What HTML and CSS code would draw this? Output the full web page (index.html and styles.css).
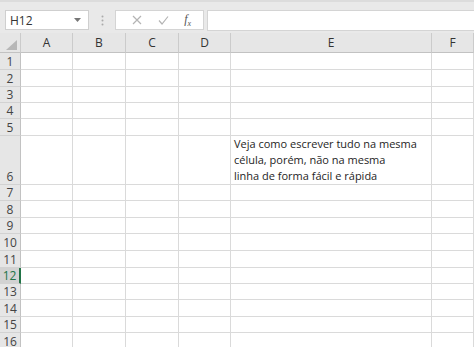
FILE: index.html
```html
<!DOCTYPE html>
<html lang="pt">
<head>
    <meta charset="UTF-8">
    <meta name="viewport" content="width=device-width, initial-scale=1.0">
    <title>Planilha</title>
    <link rel="stylesheet" href="styles.css">
</head>
<body>
    <div class="formula-bar">
        <div class="name-box">
            <span>H12</span>
            <svg class="arrow" width="7" height="4" viewBox="0 0 7 4"><path d="M0 0h7L3.5 4z" fill="#777"/></svg>
        </div>
        <div class="grip">
            <svg width="3" height="11" viewBox="0 0 3 11"><circle cx="1.5" cy="1.5" r="1" fill="#aaa"/><circle cx="1.5" cy="5.5" r="1" fill="#aaa"/><circle cx="1.5" cy="9.5" r="1" fill="#aaa"/></svg>
        </div>
        <div class="fx-buttons">
            <svg width="10" height="10" viewBox="0 0 10 10"><path d="M1 1l8 8M9 1l-8 8" stroke="#b4b4b4" stroke-width="1.2"/></svg>
            <svg width="11" height="9" viewBox="0 0 11 9"><path d="M1 4.5l3 3.5 6-7.5" stroke="#b4b4b4" stroke-width="1.2" fill="none"/></svg>
            <span class="fx">f<sub>x</sub></span>
        </div>
        <div class="formula-input"></div>
    </div>

    <table class="sheet">
        <colgroup>
            <col class="col-head">
            <col class="col-a">
            <col class="col-b">
            <col class="col-c">
            <col class="col-d">
            <col class="col-e">
            <col class="col-f">
        </colgroup>
        <thead>
            <tr>
                <th class="corner"><span class="corner-mark"></span></th>
                <th>A</th>
                <th>B</th>
                <th>C</th>
                <th>D</th>
                <th>E</th>
                <th>F</th>
            </tr>
        </thead>
        <tbody>
            <tr class="tall"><th>1</th><td></td><td></td><td></td><td></td><td></td><td></td></tr>
            <tr class="tall"><th>2</th><td></td><td></td><td></td><td></td><td></td><td></td></tr>
            <tr><th>3</th><td></td><td></td><td></td><td></td><td></td><td></td></tr>
            <tr><th>4</th><td></td><td></td><td></td><td></td><td></td><td></td></tr>
            <tr class="tall"><th>5</th><td></td><td></td><td></td><td></td><td></td><td></td></tr>
            <tr class="wrap-row">
                <th>6</th><td></td><td></td><td></td><td></td>
                <td class="text-cell">Veja como escrever tudo na mesma<br>célula, porém, não na mesma<br>linha de forma fácil e rápida</td>
                <td></td>
            </tr>
            <tr><th>7</th><td></td><td></td><td></td><td></td><td></td><td></td></tr>
            <tr class="tall"><th>8</th><td></td><td></td><td></td><td></td><td></td><td></td></tr>
            <tr><th>9</th><td></td><td></td><td></td><td></td><td></td><td></td></tr>
            <tr class="tall"><th>10</th><td></td><td></td><td></td><td></td><td></td><td></td></tr>
            <tr class="tall"><th>11</th><td></td><td></td><td></td><td></td><td></td><td></td></tr>
            <tr><th class="active">12</th><td></td><td></td><td></td><td></td><td></td><td></td></tr>
            <tr><th>13</th><td></td><td></td><td></td><td></td><td></td><td></td></tr>
            <tr class="tall"><th>14</th><td></td><td></td><td></td><td></td><td></td><td></td></tr>
            <tr><th>15</th><td></td><td></td><td></td><td></td><td></td><td></td></tr>
            <tr class="tall"><th>16</th><td></td><td></td><td></td><td></td><td></td><td></td></tr>
        </tbody>
    </table>
</body>
</html>
```

FILE: styles.css
```css
body {
    margin: 0;
    font-family: "Open Sans", "Noto Sans", sans-serif;
    background: #fff;
    overflow: hidden;
}
.formula-bar {
    display: flex;
    align-items: flex-start;
    height: 33px;
    box-sizing: border-box;
    padding: 8px 0 0 5px;
    background: #e9e9e9;
    border-top: 2px solid #dcdcdc;
}
.name-box {
    display: flex;
    align-items: center;
    justify-content: space-between;
    width: 84px;
    height: 20px;
    box-sizing: border-box;
    padding: 0 7px 0 4px;
    background: #fff;
    border: 1px solid #cfcfcf;
    font-size: 12px;
    color: #333;
}
.grip {
    width: 26px;
    height: 20px;
    display: flex;
    align-items: center;
    justify-content: center;
}
.fx-buttons {
    display: flex;
    align-items: center;
    justify-content: space-around;
    width: 89px;
    height: 20px;
    box-sizing: border-box;
    padding: 0 4px 0 8px;
    background: #fff;
    border: 1px solid #d4d4d4;
}
.fx {
    font-family: "Liberation Serif", serif;
    font-style: italic;
    font-size: 12px;
    color: #555;
}
.fx sub {
    font-size: 8px;
}
.formula-input {
    flex: 1;
    height: 21px;
    margin-left: 3px;
    box-sizing: border-box;
    background: #fff;
    border: 1px solid #d4d4d4;
    border-right: none;
}
.sheet {
    border-collapse: separate;
    border-spacing: 0;
    table-layout: fixed;
    width: 474px;
}
.col-head { width: 21px; }
.col-a { width: 52px; }
.col-b { width: 53px; }
.col-c { width: 53px; }
.col-d { width: 52px; }
.col-e { width: 201px; }
.col-f { width: 42px; }
.sheet th, .sheet td {
    padding: 0;
    box-sizing: border-box;
    border-right: 1px solid #dadada;
    border-bottom: 1px solid #dadada;
}
.sheet thead th {
    height: 20px;
    background: #e6e6e6;
    font-weight: normal;
    font-size: 12px;
    color: #333;
    border-right-color: #cbcbcb;
    border-bottom-color: #c2c2c2;
}
.sheet thead th.corner {
    position: relative;
}
.corner-mark {
    position: absolute;
    right: 3px;
    bottom: 2px;
    width: 0;
    height: 0;
    border-left: 11px solid transparent;
    border-bottom: 10px solid #b7b7b7;
}
.sheet tbody tr {
    height: 16px;
}
.sheet tbody tr.tall {
    height: 17px;
}
.sheet tbody tr.wrap-row {
    height: 49px;
}
.sheet tbody th {
    background: #e6e6e6;
    font-weight: normal;
    font-size: 12px;
    line-height: 15px;
    color: #444;
    text-align: center;
    vertical-align: bottom;
    border-right-color: #c2c2c2;
    border-bottom-color: #d2d2d2;
}
.sheet tbody th.active {
    background: #d2d2d2;
    color: #217346;
    border-right: 2px solid #217346;
}
.text-cell {
    vertical-align: bottom;
    padding: 0 0 0 3px !important;
    font-size: 11px;
    line-height: 16px;
    color: #1e1e1e;
    white-space: nowrap;
}
```
